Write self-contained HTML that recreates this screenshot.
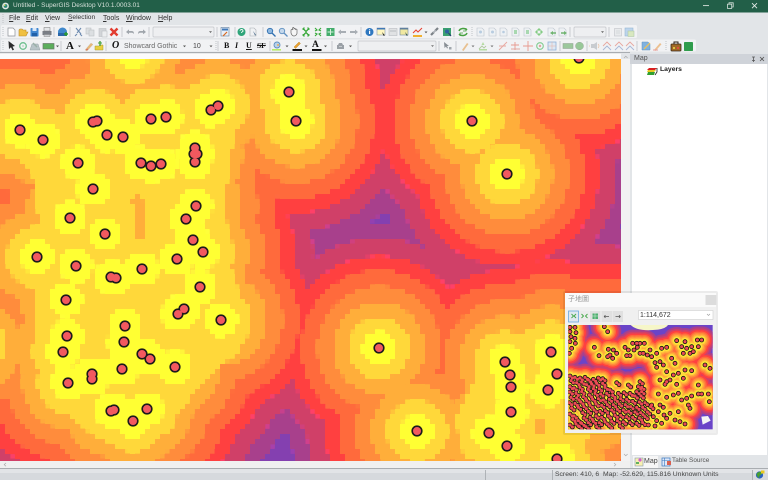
<!DOCTYPE html>
<html><head><meta charset="utf-8"><title>SuperGIS Desktop</title>
<style>
html,body{margin:0;padding:0;width:768px;height:480px;overflow:hidden;background:#e2e5e8}
body{position:relative;font-family:"Liberation Sans","Noto Sans CJK TC",sans-serif}
svg{position:absolute;left:0;top:0}
.t{position:absolute;white-space:nowrap;line-height:1}
u{text-decoration:underline}
</style></head>
<body>
<svg width="768" height="480" viewBox="0 0 768 480" xmlns="http://www.w3.org/2000/svg">
<defs>
<clipPath id="mc"><rect x="0" y="59" width="621" height="402"/></clipPath>
<clipPath id="oc"><rect x="25" y="105" width="433" height="313"/></clipPath>
<filter id="pix" filterUnits="userSpaceOnUse" primitiveUnits="userSpaceOnUse" x="0" y="59" width="630" height="410" color-interpolation-filters="sRGB">
<feFlood x="2" y="61" width="1" height="1" flood-color="#000"/>
<feComposite x="0" y="59" width="5" height="5"/>
<feTile result="a"/>
<feComposite in="SourceGraphic" in2="a" operator="in"/>
<feMorphology operator="dilate" radius="2"/>
</filter>
<path id="pts" fill="none" stroke-linecap="round" d="M20 130h0M43 140h0M78 163h0M93 189h0M70 218h0M105 234h0M37 257h0M76 266h0M93 122h0M97 121h0M107 135h0M123 137h0M151 119h0M166 117h0M211 110h0M218 106h0M289 92h0M296 121h0M141 163h0M151 166h0M161 164h0M195 148h0M194 154h0M197 154h0M195 162h0M196 206h0M186 219h0M193 240h0M203 252h0M177 259h0M142 269h0M472 121h0M507 174h0M579 58h0M111 277h0M116 278h0M200 287h0M66 300h0M184 309h0M178 314h0M221 320h0M125 326h0M124 342h0M67 336h0M63 352h0M142 354h0M150 359h0M122 369h0M175 367h0M92 374h0M92 379h0M68 383h0M111 411h0M114 410h0M147 409h0M133 421h0M379 348h0M505 362h0M510 375h0M511 387h0M551 352h0M557 374h0M548 390h0M511 412h0M489 433h0M507 446h0M557 459h0M417 431h0"/>
<path id="off" fill="none" stroke-linecap="round" d="M133 52h0M-25 345h0M600 355h0M592 405h0"/>
<path id="mp" fill="none" stroke-linecap="round" d="M30 112h0M45 112h0M30 125h0M48 128h0M33 140h0M45 145h0M30 155h0M46 160h0M35 175h0M28 190h0M133 110h0M143 125h0M103 172h0M117 197h0M145 178h0M160 180h0M150 195h0M143 200h0M170 190h0M158 205h0M195 172h0M205 180h0M200 197h0M210 197h0M218 160h0M230 160h0M240 160h0M253 160h0M222 180h0M240 190h0M250 190h0M232 172h0M270 180h0M262 195h0M275 200h0M290 190h0M305 175h0M320 172h0M300 215h0M285 218h0M290 232h0M310 225h0M335 205h0M345 220h0M350 152h0M375 155h0M365 170h0M380 175h0M370 190h0M390 190h0M400 185h0M395 170h0M415 170h0M412 150h0M425 150h0M435 225h0M450 235h0M320 245h0M340 255h0M355 250h0M375 240h0M395 242h0M370 265h0M300 270h0M320 275h0M330 270h0M350 283h0M315 283h0M415 285h0M295 312h0M320 322h0M340 315h0M355 310h0M365 330h0M380 325h0M395 318h0M415 312h0M425 312h0M445 312h0M448 335h0M385 345h0M390 355h0M355 365h0M330 370h0M320 385h0M345 390h0M360 395h0M375 402h0M300 345h0M310 352h0M275 345h0M295 365h0M312 375h0M280 380h0M290 392h0M305 400h0M265 405h0M285 408h0"/>
<path id="md" fill="none" stroke-linecap="round" d="M30 258h0M45 262h0M60 264h0M75 262h0M33 272h0M50 278h0M65 276h0M85 270h0M100 268h0M115 264h0M128 266h0M170 278h0M30 290h0M42 294h0M60 292h0M80 284h0M95 282h0M110 280h0M128 280h0M205 285h0M240 275h0M235 290h0M245 292h0M30 306h0M48 310h0M65 305h0M85 298h0M100 296h0M118 296h0M135 292h0M150 300h0M230 305h0M245 305h0M33 322h0M50 324h0M70 320h0M88 315h0M105 310h0M122 312h0M140 310h0M158 316h0M175 310h0M192 308h0M210 310h0M225 318h0M243 318h0M28 338h0M45 340h0M62 336h0M80 332h0M98 328h0M115 326h0M130 330h0M148 328h0M165 328h0M182 326h0M200 328h0M218 334h0M238 336h0M255 338h0M35 354h0M55 352h0M72 350h0M90 346h0M108 342h0M125 346h0M142 344h0M160 344h0M178 342h0M196 344h0M212 350h0M230 352h0M248 352h0M272 350h0M30 372h0M42 378h0M68 368h0M85 364h0M102 360h0M120 364h0M136 362h0M155 360h0M172 358h0M190 360h0M206 364h0M225 366h0M242 368h0M262 366h0M38 388h0M55 392h0M72 384h0M90 382h0M108 378h0M125 382h0M145 378h0M165 376h0M182 376h0M200 380h0M218 382h0M238 384h0M255 380h0M30 405h0M48 402h0M65 400h0M85 398h0M100 394h0M118 398h0M135 396h0M155 394h0M172 392h0M190 396h0M210 398h0M230 400h0M248 398h0M58 410h0M78 410h0M110 410h0M148 408h0M180 408h0"/>
</defs>

<!-- chrome bars -->
<rect x="0" y="0" width="768" height="12.5" fill="#225f48"/>
<rect x="0" y="12.5" width="768" height="468" fill="#e2e5e8"/>
<rect x="1" y="25" width="636" height="13" fill="#f1f2f4" rx="1.5"/>
<rect x="1" y="39.5" width="695" height="12" fill="#f1f2f4" rx="1.5"/>
<rect x="0" y="52" width="630" height="1.3" fill="#a9adb1"/>
<rect x="0" y="53.3" width="621" height="6" fill="#fbfbfb"/>

<!-- heat map -->
<g clip-path="url(#mc)">
<g filter="url(#pix)">
<rect x="0" y="59" width="630" height="410" fill="#8440b0"/>
<g stroke="#a8408c" stroke-width="252"><use href="#pts"/><use href="#off"/></g>
<g stroke="#d04068" stroke-width="220"><use href="#pts"/><use href="#off"/></g>
<g stroke="#ff4040" stroke-width="184"><use href="#pts"/><use href="#off"/></g>
<g stroke="#ff6a3c" stroke-width="156"><use href="#pts"/><use href="#off"/></g>
<g stroke="#ff8c3c" stroke-width="124"><use href="#pts"/><use href="#off"/></g>
<g stroke="#ffae3a" stroke-width="92"><use href="#pts"/><use href="#off"/></g>
<g stroke="#ffd83a" stroke-width="62"><use href="#pts"/><use href="#off"/></g>
<polygon fill="#ffd83a" points="70,125 95,105 150,105 205,100 235,130 225,200 232,270 245,310 240,350 200,385 165,432 100,440 55,405 35,350 38,290 40,230 30,160 45,150"/>
<polygon fill="#ffd83a" points="475,380 490,345 530,330 575,330 600,360 600,420 575,461 465,461 455,420"/>
<polygon fill="#ffae3a" points="125,206 137,194 147,206 147,237 133,237 133,206"/>
<rect x="535" y="420" width="10" height="12" fill="#ffae3a"/>
<g stroke="#ffff33" stroke-width="34"><use href="#pts"/><use href="#off"/></g>
</g>
<g stroke="#1c1a1c" stroke-width="11.2"><use href="#pts"/></g>
<g stroke="#f2595f" stroke-width="8"><use href="#pts"/></g>
</g>

<!-- right column + bottom bars -->
<rect x="621" y="53" width="147" height="427" fill="#e2e5e8"/>
<rect x="621" y="59" width="9" height="402" fill="#f2f2f2"/>
<path d="M624 58l1.8-1.8 1.8 1.8M624 454l1.8 1.8 1.8-1.8" fill="none" stroke="#aaa" stroke-width=".7"/>
<rect x="0" y="461" width="630" height="7" fill="#f0f0f0"/>
<path d="M6 463l-1.8 1.6 1.8 1.6M614 463l1.8 1.6-1.8 1.6" fill="none" stroke="#aaa" stroke-width=".7"/>
<rect x="0" y="468" width="768" height="1" fill="#a9adb1"/>
<rect x="0" y="469" width="768" height="11" fill="#d6d9dd"/>
<rect x="0" y="469" width="768" height="4" fill="#e2e4e7"/>
<rect x="485" y="470" width=".8" height="10" fill="#a4a8ac"/>
<rect x="552" y="470" width=".8" height="10" fill="#a4a8ac"/>
<rect x="752" y="470" width=".8" height="10" fill="#a4a8ac"/>
<!-- map dock panel -->
<rect x="630" y="54" width="138" height="10" fill="#cfd3d9"/>
<rect x="632" y="64" width="135" height="391" fill="#fff"/>
<rect x="633" y="456" width="25" height="12" fill="#f6f6f6"/>
<!-- panel icons -->
<path d="M752 57h3M753.5 57v3.5M752 60.5h3M753.5 60.5v1.5" stroke="#555" stroke-width=".8" fill="none"/>
<path d="M760 57l4 4M764 57l-4 4" stroke="#555" stroke-width=".8"/>
<path d="M649 68h8l-2 2h-8z" fill="#d82020"/><path d="M648 70h8l-2 2h-7z" fill="#e8c820"/><path d="M648 72h7l-1 3h-7z" fill="#30a030"/><path d="M657 68v4l-2 3" fill="none" stroke="#222" stroke-width=".8"/>
<!-- tab icons -->
<rect x="635" y="458" width="8" height="8" fill="#f8f0b0" stroke="#8898b0" stroke-width=".6"/><circle cx="640" cy="460" r="1.6" fill="#d060d0"/><rect x="636" y="462" width="3" height="2" fill="#60b060"/>
<rect x="662" y="458" width="8" height="8" fill="#dfe8f8" stroke="#3878c0" stroke-width=".7"/><path d="M662 460.5h8M664.5 458v8" stroke="#3878c0" stroke-width=".6"/><rect x="667" y="461" width="4" height="4" fill="#d86050"/>
<!-- status globe -->
<circle cx="759.5" cy="475" r="3.6" fill="#2860c0"/><path d="M756.5 474q2-3 5-2q1 2-1 3t-1 3q-2 0-3-4z" fill="#48a030"/><rect x="761" y="470.5" width="3.5" height="3" fill="#e8c820"/>

<!-- title icon + window buttons -->
<circle cx="5.5" cy="6" r="3.4" fill="#dfe7e3"/><circle cx="5.5" cy="6" r="1.9" fill="#2b8a78"/><circle cx="4.6" cy="5.2" r=".8" fill="#d8d050"/>
<path d="M703 5.6h6" stroke="#d7e2dc" stroke-width=".9"/>
<rect x="727.5" y="4.2" width="4.2" height="4.2" fill="none" stroke="#d7e2dc" stroke-width=".8"/><path d="M729 4v-1.2h4.2v4.2h-1.2" fill="none" stroke="#d7e2dc" stroke-width=".8"/>
<path d="M752 3.2l5 5M757 3.2l-5 5" stroke="#e4ece8" stroke-width=".9"/>

<!-- grips & separators -->
<g stroke="#b4b8bc" stroke-width=".8" stroke-dasharray="1 1">
<path d="M3 14v9M3 27v10M3 41v10M472 27v10M216 41v10M666 41v10"/>
</g>
<g stroke="#b8bcc0" stroke-width=".7">
<path d="M54 27v10M70 27v10M122 27v10M149 27v10M217 27v10M235 27v10M263 27v10M361 27v10M454 27v10M570 27v10M609 27v10M61 41v10M106 41v10M218 41v10M270 41v10M332 41v10M439 41v10M456 41v10M587 41v10M637 41v10M560 41v10"/>
</g>

<!-- ROW 1 -->
<path d="M8 28h5l2 2v6H8z" fill="#fff" stroke="#8c9096" stroke-width=".7"/>
<path d="M19 30v6h7l2-4h-2v-2h-3l-1-1h-2z" fill="#f0c040" stroke="#b98c2c" stroke-width=".6"/>
<rect x="30.5" y="28" width="8" height="8.5" rx=".8" fill="#3f86d0"/><rect x="32.5" y="28" width="4" height="3" fill="#dbe8f6"/><rect x="32" y="33" width="5" height="3.5" fill="#1f5fa8"/>
<rect x="42.5" y="31" width="9" height="4" fill="#7a7f86"/><rect x="44" y="27.5" width="6" height="3.5" fill="#e4e6e8" stroke="#777" stroke-width=".5"/><rect x="44" y="34.5" width="6" height="2" fill="#cfd2d6" stroke="#777" stroke-width=".4"/>
<path d="M58 32a4.5 4.5 0 019 0v2h-9z" fill="#3f88cc"/><rect x="58" y="33" width="9" height="3" fill="#2a66a8"/><path d="M64 34h4M66 32v4" stroke="#2a9a30" stroke-width="1.4"/>
<path d="M76 28l5 6M81 28l-4 5M75 36l2-2M82 36l-2-2" stroke="#6d8bb0" stroke-width="1.1" fill="none"/>
<rect x="86" y="28" width="5" height="6" fill="#dcdfe2" stroke="#bcc0c4" stroke-width=".6"/><rect x="89" y="30" width="5" height="6" fill="#dcdfe2" stroke="#bcc0c4" stroke-width=".6"/>
<rect x="99" y="28.5" width="7" height="8" fill="#d2d5d8" stroke="#bcc0c4" stroke-width=".6"/><rect x="102" y="31" width="5" height="6" fill="#eceef0" stroke="#bcc0c4" stroke-width=".6"/>
<path d="M110.5 28.5l7 7M117.5 28.5l-7 7" stroke="#e23c30" stroke-width="2.4"/>
<path d="M126 32l3-2.6v1.6h3q2 0 2 3q-1-1.3-2-1.3h-3v1.6z" fill="#a0a6ac"/>
<path d="M146 32l-3-2.6v1.6h-3q-2 0-2 3q1-1.3 2-1.3h3v1.6z" fill="#a0a6ac"/>
<rect x="153" y="27" width="61" height="10" rx="1" fill="#eeeff1" stroke="#c2c5c9" stroke-width=".7"/><path d="M209 31.2h3l-1.5 1.8z" fill="#666"/>
<rect x="221" y="27.5" width="8" height="8.5" fill="#e8f0f8" stroke="#5f7f9f" stroke-width=".6"/><rect x="222" y="28.5" width="6" height="2" fill="#3f78b8"/><path d="M223 36l4-4" stroke="#d86a20" stroke-width="1.2"/>
<circle cx="241.5" cy="32" r="4" fill="#2fa57a"/><path d="M240 30.8a1.5 1.5 0 113 .4c-.5.7-1.5.7-1.5 1.8" fill="none" stroke="#fff" stroke-width=".9"/>
<path d="M250 28h4l2 2v6h-6z" fill="#f0f2f4" stroke="#a8adb2" stroke-width=".6"/><path d="M253 31l3 4-1 .5z" fill="#4a6a8a"/>
<circle cx="270" cy="31" r="2.7" fill="#8fb8e0" stroke="#2f70b0" stroke-width=".9"/><path d="M272 33l3.5 3.5" stroke="#2f70b0" stroke-width="1.3"/>
<circle cx="282" cy="31" r="2.7" fill="#c4d8ec" stroke="#5f90c0" stroke-width=".9"/><path d="M284 33l3.5 3.5" stroke="#5f90c0" stroke-width="1.3"/>
<path d="M291 33v-3q1-1 1.5 0v-2q1-1 1.5 0v1q1-1 1.5 0v.5q1-.8 1.5 0v4q-1 2.5-3 2.5t-3-3z" fill="#f6f6f6" stroke="#666" stroke-width=".7"/>
<path d="M303 28.5l3 3 3-3M303 35.5l3-3 3 3" fill="none" stroke="#36a838" stroke-width="1.3"/><path d="M303 28h2M303 28v2M309 28h-2M309 28v2M303 36h2M303 36v-2M309 36h-2M309 36v-2" stroke="#36a838" stroke-width=".8"/>
<path d="M315 31l2-1-2-2M321 31l-2-1 2-2M315 33l2 1-2 2M321 33l-2 1 2 2" fill="none" stroke="#36a838" stroke-width="1.1"/>
<rect x="326.5" y="28" width="8" height="8" fill="#44ad6c"/><path d="M330.5 29v6M327.5 32h6" stroke="#d4f0dc" stroke-width="1"/>
<path d="M338 32l3-2.5v1.5h5v2h-5v1.5z" fill="#a8aeb4"/>
<path d="M358 32l-3-2.5v1.5h-5v2h5v1.5z" fill="#a8aeb4"/>
<circle cx="369.5" cy="32" r="4" fill="#2f78c0"/><rect x="369" y="31" width="1.2" height="3" fill="#fff"/><rect x="369" y="29.3" width="1.2" height="1" fill="#fff"/>
<rect x="377" y="28" width="8" height="7" fill="#fff7c0" stroke="#8899aa" stroke-width=".6"/><rect x="377" y="28" width="8" height="1.5" fill="#3f78b8"/><path d="M382 32l3 3.5-1.5.3z" fill="#222"/>
<rect x="389" y="28.5" width="8" height="7" fill="#e0e2e4" stroke="#b8bcc0" stroke-width=".6"/><path d="M390 31h6" stroke="#b8bcc0"/>
<rect x="400" y="28" width="8" height="7" fill="#f0e8a0" stroke="#7088a0" stroke-width=".6"/><rect x="400" y="28" width="8" height="1.5" fill="#5f7f9f"/><path d="M405 32l3 3.5-1.5.3z" fill="#355"/>
<path d="M413 36h9" stroke="#f0b030" stroke-width="2"/><path d="M413 33l3-3 2 2 4-4" fill="none" stroke="#e84030" stroke-width="1"/>
<path d="M424.5 31.5h3l-1.5 1.8z" fill="#555"/>
<path d="M431 35l3-3M435 31l3-3" stroke="#7c8288" stroke-width="2.2"/><path d="M433 33l3-3" stroke="#aab0b6" stroke-width="1"/>
<rect x="443" y="28" width="8" height="8" fill="#3aa070"/><circle cx="447" cy="31.5" r="2" fill="#3060a0"/><path d="M448.5 33l2.5 3" stroke="#25456f" stroke-width="1.2"/>
<path d="M459 31a4.5 3.5 0 018-1M467 33a4.5 3.5 0 01-8 1" fill="none" stroke="#46a040" stroke-width="1.5"/><path d="M466 28v3h-3M460 36v-3h3" fill="none" stroke="#46a040" stroke-width=".8"/>
<g fill="#eef1f4" stroke="#bcc4cc" stroke-width=".6"><path d="M477 28h5l2 2v6h-7zM489 28h5l2 2v6h-7zM500 28h5l2 2v6h-7zM512 28h5l2 2v6h-7zM524 28h5l2 2v6h-7z"/></g>
<g fill="#b8cce0"><circle cx="480.5" cy="32" r="1.5"/><circle cx="492.5" cy="32" r="1.5"/><circle cx="503.5" cy="32" r="1.3"/></g>
<rect x="514" y="30" width="3" height="4" fill="#a8d8b0"/><rect x="526" y="30" width="3" height="4" fill="#a8d8b0"/>
<path d="M539 28l2 2h-4zM539 36l2-2h-4zM535 32l2-2v4zM543 32l-2-2v4z" fill="#84cc84"/><rect x="537.5" y="30.5" width="3" height="3" fill="none" stroke="#84cc84" stroke-width=".6"/>
<path d="M548 28h5l2 2v6h-7z" fill="#eef1f4" stroke="#bcc4cc" stroke-width=".6"/><path d="M550 33l3-2v1.3h3v1.5h-3V35z" fill="#70b470"/>
<path d="M559 28h5l2 2v6h-7z" fill="#eef1f4" stroke="#bcc4cc" stroke-width=".6"/><path d="M567 33l-3-2v1.3h-3v1.5h3V35z" fill="#70b470"/>
<rect x="574" y="27" width="32" height="10" rx="1" fill="#eeeff1" stroke="#c2c5c9" stroke-width=".7"/><path d="M601 31.2h3l-1.5 1.8z" fill="#666"/>
<rect x="614.5" y="28.5" width="7" height="7.5" fill="#e8eaec" stroke="#c0c4c8" stroke-width=".6"/><path d="M616 31h4M616 33h4" stroke="#c4c8cc" stroke-width=".6"/>
<rect x="625" y="28" width="8" height="8" fill="#bcd4ec" stroke="#98b8d4" stroke-width=".6"/><rect x="628" y="31" width="6" height="5.5" fill="#d8e8c0" stroke="#a8c4a0" stroke-width=".5"/>

<!-- ROW 2 -->
<path d="M8.5 41l6.5 5-2.5.6 1.5 3.2-1.5.6-1.5-3.2-2 1.8z" fill="#2c2c2e"/>
<circle cx="23" cy="46" r="3.3" fill="none" stroke="#70c090" stroke-width="1.3"/><circle cx="23" cy="46" r="1" fill="#c0d8c8"/>
<path d="M30 50l2-6h6l2 6z" fill="#b8c4c8" stroke="#98a4a8" stroke-width=".5"/><path d="M33 43l4 4" stroke="#9ab0a8" stroke-width="1.4"/>
<rect x="43" y="43.5" width="11" height="5.5" fill="#5cae5c" stroke="#6a7a6a" stroke-width=".7"/>
<path d="M56 45.5h3l-1.5 1.8z" fill="#555"/>
<path d="M78 45.5h3l-1.5 1.8z" fill="#555"/>
<path d="M85 50l6-7 2 1.5-6 6.5z" fill="#e8b878" stroke="#c8c0b0" stroke-width=".4"/><path d="M86 50l2-1" stroke="#d87060" stroke-width="1"/>
<path d="M95 50v-4h4l1-1h3v5z" fill="#e8d040" stroke="#a89830" stroke-width=".5"/><path d="M100 41v5" stroke="#46a040" stroke-width="1.4"/><path d="M98 43h4" stroke="#46a040" stroke-width="1"/>
<path d="M209.5 45.5h3l-1.5 1.8zM183 45.5h3l-1.5 1.8z" fill="#555"/>
<path d="M285.5 45.5h3l-1.5 1.8zM304.5 45.5h3l-1.5 1.8zM324 45.5h3l-1.5 1.8zM349 45.5h3l-1.5 1.8z" fill="#555"/>
<circle cx="277" cy="45" r="3" fill="#b8d4ec" stroke="#5f8fc0" stroke-width=".9"/><circle cx="278" cy="45" r="1" fill="#e8a860"/><rect x="272" y="49" width="9" height="1.6" fill="#b8ec68"/>
<path d="M294 47l5-5 1.5 1.5-5 5z" fill="#e8a030" stroke="#b88020" stroke-width=".4"/><rect x="292.5" y="49" width="9.5" height="2" fill="#111"/>
<rect x="312" y="49" width="9.5" height="2" fill="#111"/>
<path d="M337 49v-4h7v4zM338 45l1-2h3l1 2" fill="#9aa0a6"/><rect x="339" y="46" width="3" height="1" fill="#c8ccd0"/>
<rect x="358" y="41" width="78" height="10" rx="1" fill="#eeeff1" stroke="#c2c5c9" stroke-width=".7"/><path d="M431 45.2h3l-1.5 1.8z" fill="#777"/>
<path d="M444 42l5 4h-2l1 2-1 .5-1-2-1.5 1.5z" fill="#888e94"/><rect x="449" y="47" width="2.5" height="2.5" fill="#a0a6ac"/>
<path d="M462 50l5-7 1.5 1-5 7z" fill="#e8c090"/><path d="M471.5 45.5h3l-1.5 1.8zM490.5 45.5h3l-1.5 1.8z" fill="#777"/>
<path d="M479 49l3-3 2 2 2-2" fill="none" stroke="#b0c8a0" stroke-width=".9"/><rect x="479" y="49" width="8" height="1.5" fill="#b4dca0"/><path d="M483 42l1.5 3h-3z" fill="#b4dca0"/>
<path d="M499 50l8-8M499 46h7" stroke="#e8a8a0" stroke-width=".9" fill="none"/>
<path d="M512 44h8M516 41v8" stroke="#e89a90" stroke-width=".9" transform="translate(-1 1)"/><path d="M511 49h9" stroke="#e0a098" stroke-width=".9"/>
<path d="M523 46h10M528 41v10" stroke="#e89a90" stroke-width=".9"/>
<circle cx="540" cy="46" r="3.3" fill="none" stroke="#80cc90" stroke-width="1.1"/><circle cx="540" cy="46" r="1.2" fill="#e0a0a0"/>
<rect x="548" y="42" width="8" height="8" fill="#dce8f4" stroke="#8fb0d8" stroke-width=".8"/><path d="M552 42v8M548 46h8" stroke="#e8b0a0" stroke-width=".5"/>
<rect x="563" y="43.5" width="10" height="5" fill="#9cc89c" stroke="#98a898" stroke-width=".6"/>
<ellipse cx="579.5" cy="46" rx="4" ry="3.8" fill="#98c898" stroke="#98a898" stroke-width=".5"/>
<path d="M591 44h3l3-2v8l-3-2h-3z" fill="#c8ccd0"/><path d="M598 44q2 2 0 4M590 46h-1" stroke="#e8c0a0" stroke-width=".7" fill="none"/>
<g fill="none" stroke="#e8a8a0" stroke-width=".9"><path d="M603 46l4-4 4 4M615 46l4-4 4 4M626 46l4-4 4 4"/></g>
<g fill="none" stroke="#a8b8d8" stroke-width=".9"><path d="M603 50l4-4 4 4M615 50l4-4 4 4M626 50l4-4 4 4"/></g>
<path d="M642 42h6l2 2v6h-8z" fill="#7fb2e0" stroke="#6090c0" stroke-width=".5"/><path d="M644 49l6-6" stroke="#e8c060" stroke-width="1.3"/>
<path d="M654 50l6-7 1.5 1.2-6 6.8z" fill="#ecc090"/><rect x="653" y="49.5" width="5" height="1" fill="#e8a0a0"/>
<rect x="671" y="44" width="10" height="7" rx=".8" fill="#a06828" stroke="#3a2a18" stroke-width=".8"/><path d="M674 44v-2h4v2" fill="none" stroke="#2a2018" stroke-width="1"/><rect x="673" y="47" width="2" height="2" fill="#e0c040"/><rect x="677" y="47" width="2" height="2" fill="#e05040"/>
<rect x="684" y="42" width="9" height="9" rx=".8" fill="#2f9c4c"/>

<!-- overview panel -->
<rect x="563" y="291" width="155" height="144" fill="#000" opacity=".08" rx="2"/>
<rect x="565" y="293" width="151" height="140" fill="#f0f0f0"/>
<rect x="565" y="293" width="151" height="14" fill="#fafafa"/>
<rect x="705.5" y="295" width="11" height="10" fill="#dcdcdc"/>
<!-- overview buttons -->
<rect x="568.5" y="311" width="10" height="11" fill="#e0e8f0" stroke="#6aa8dc" stroke-width=".8"/>
<rect x="579.5" y="311" width="10" height="11" fill="#ececec"/>
<rect x="590" y="311" width="10.5" height="11" fill="#e0e0e0"/>
<rect x="601.5" y="311" width="10.5" height="11" fill="#e0e0e0"/>
<rect x="612.5" y="311" width="10.5" height="11" fill="#e0e0e0"/>
<path d="M571.5 314l2 2-2 2M576 314l-2 2 2 2M581.5 314l2 2-2 2M587.5 314l-2 2 2 2" fill="none" stroke="#44a848" stroke-width=".9"/>
<rect x="592.5" y="313.5" width="5.5" height="5.5" fill="#50b070"/><path d="M595 313.5v5.5M592.5 316h5.5" stroke="#d8f0e0" stroke-width=".5"/>
<path d="M604 316.5h5M604 316.5l1.5-1.3M604 316.5l1.5 1.3M620.5 316.5h-5M620.5 316.5l-1.5-1.3M620.5 316.5l-1.5 1.3" fill="none" stroke="#555" stroke-width=".7"/>
<rect x="638.5" y="310.5" width="74.500" height="9" fill="#fff" stroke="#cfcfcf" stroke-width=".6"/>
<path d="M707 314l1.5 1.5 1.5-1.5" fill="none" stroke="#999" stroke-width=".6"/>
<!-- overview map -->
<g transform="translate(560 290) scale(.33333)">
<rect x="25" y="105" width="433" height="313" fill="#6a44c8"/>
<g clip-path="url(#oc)">
<g stroke="#a8408c" stroke-width="82"><use href="#mp"/><use href="#md"/></g>
<g stroke="#d04068" stroke-width="70"><use href="#mp"/><use href="#md"/></g>
<g stroke="#ff4040" stroke-width="60"><use href="#mp"/><use href="#md"/></g>
<g stroke="#ff6a3c" stroke-width="50"><use href="#mp"/><use href="#md"/></g>
<g stroke="#ff8c3c" stroke-width="42"><use href="#mp"/><use href="#md"/></g>
<g stroke="#ffae3a" stroke-width="34"><use href="#mp"/><use href="#md"/></g>
<g stroke="#ffd83a" stroke-width="26"><use href="#mp"/><use href="#md"/></g>
<g stroke="#ffff33" stroke-width="18"><use href="#mp"/><use href="#md"/></g>
<path d="M212 105h112q-6 10-30 14q-40 4-60-2q-14-4-22-12z" fill="#f6f6c8"/>
<path d="M424 380l20-2 8 14-24 12z" fill="#f4f4f4"/>
<g stroke="#141214" stroke-width="14.5"><use href="#mp"/><use href="#md"/><use href="#md" transform="translate(7 6)"/></g>
<g stroke="#ec4c55" stroke-width="9.5"><use href="#mp"/><use href="#md"/><use href="#md" transform="translate(7 6)"/></g>
</g>
</g>
</svg>

<!-- texts -->
<div class="t" style="left:13px;top:3px;font-size:6.45px;color:#d6e0da;letter-spacing:.05px">Untitled - SuperGIS Desktop V10.1.0003.01</div>
<div class="t" style="left:9px;top:15px;font-size:7px;color:#333"><u>F</u>ile</div>
<div class="t" style="left:26px;top:15px;font-size:7px;color:#333"><u>E</u>dit</div>
<div class="t" style="left:45px;top:15px;font-size:7px;color:#333"><u>V</u>iew</div>
<div class="t" style="left:68px;top:15px;font-size:6.6px;color:#333"><u>S</u>election</div>
<div class="t" style="left:103px;top:15px;font-size:7px;color:#333"><u>T</u>ools</div>
<div class="t" style="left:126px;top:15px;font-size:7px;color:#333"><u>W</u>indow</div>
<div class="t" style="left:158px;top:15px;font-size:7px;color:#333"><u>H</u>elp</div>

<div class="t" style="left:66px;top:41px;font-size:11px;font-weight:bold;font-family:'Liberation Serif',serif;color:#111">A</div>
<div class="t" style="left:112px;top:41px;font-size:10px;font-style:italic;font-weight:bold;font-family:'Liberation Serif',serif;color:#111">O</div>
<div class="t" style="left:124px;top:42.5px;font-size:7px;color:#666">Showcard Gothic</div>
<div class="t" style="left:193px;top:42.5px;font-size:7px;color:#444">10</div>
<div class="t" style="left:224px;top:42px;font-size:8px;font-weight:bold;font-family:'Liberation Serif',serif;color:#111">B</div>
<div class="t" style="left:235px;top:42px;font-size:8px;font-style:italic;font-weight:bold;font-family:'Liberation Serif',serif;color:#111">I</div>
<div class="t" style="left:246px;top:42px;font-size:8px;font-weight:bold;font-family:'Liberation Serif',serif;color:#111;text-decoration:underline">U</div>
<div class="t" style="left:257px;top:42px;font-size:7.5px;font-weight:bold;font-family:'Liberation Serif',serif;color:#111;text-decoration:line-through">SF</div>
<div class="t" style="left:312px;top:40.5px;font-size:9.5px;font-weight:bold;font-family:'Liberation Serif',serif;color:#111">A</div>

<div class="t" style="left:634px;top:55px;font-size:7px;color:#555">Map</div>
<div class="t" style="left:660px;top:67px;font-size:6.8px;font-weight:bold;color:#222">Layers</div>
<div class="t" style="left:644px;top:458px;font-size:7px;color:#444">Map</div>
<div class="t" style="left:672px;top:458px;font-size:6.4px;color:#555">Table Source</div>
<div class="t" style="left:555px;top:471.5px;font-size:6.8px;color:#444">Screen: 410, 6&nbsp; Map: -52.629, 115.816 Unknown Units</div>
<div class="t" style="left:568px;top:296px;font-size:7px;color:#999">子地圖</div>
<div class="t" style="left:640px;top:311.5px;font-size:7px;color:#333">1:114,672</div>
</body></html>
